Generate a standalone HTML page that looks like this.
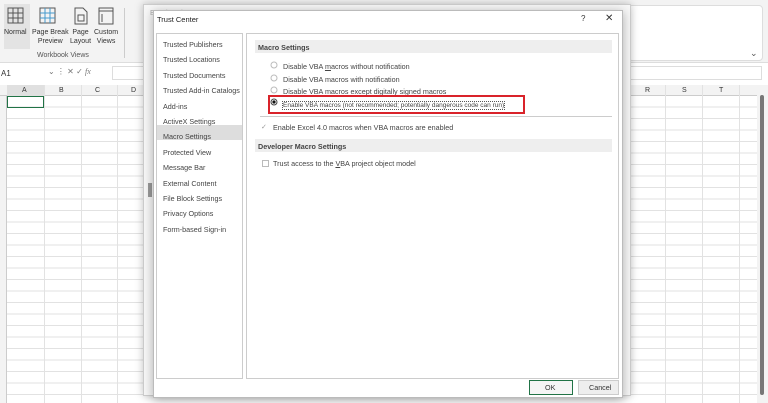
<!DOCTYPE html>
<html><head><style>
*{margin:0;padding:0;box-sizing:border-box}
body{width:768px;height:403px;overflow:hidden;background:#fff;font-family:"Liberation Sans",sans-serif;position:relative;color:#333}
.a{position:absolute}
.t{font-size:7.2px;white-space:nowrap}
</style></head><body>
<div class="a" style="left:0;top:0;width:768px;height:63px;background:#f3f3f3;border-bottom:1px solid #ddd"></div>
<div class="a" style="left:4px;top:4px;width:26px;height:45px;background:#e3e3e3"></div>
<svg class="a" style="left:0;top:5px" width="130" height="30">
<g fill="none" stroke="#555" stroke-width="1">
<rect x="8" y="3" width="15" height="15"/><path d="M8 8h15M8 13h15M13 3v15M18 3v15"/>
<rect x="40" y="3" width="15" height="15"/><path d="M40 8h15M40 13h15M45 3v15M50 3v15" stroke="#49c"/>
<path d="M75 3h8l4 4v12h-12z"/><rect x="78" y="10" width="6" height="6"/>
<rect x="99" y="3" width="14" height="16"/><path d="M99 6h14M102 9v8"/>
</g></svg>
<div class="a t" style="left:4px;top:28px;font-size:7px;line-height:9px">Normal</div>
<div class="a t" style="left:32px;top:28px;font-size:7px;line-height:9px;text-align:center">Page Break<br>Preview</div>
<div class="a t" style="left:70px;top:28px;font-size:7px;line-height:9px;text-align:center">Page<br>Layout</div>
<div class="a t" style="left:94px;top:28px;font-size:7px;line-height:9px;text-align:center">Custom<br>Views</div>
<div class="a t" style="left:37px;top:52px;font-size:7px;color:#555">Workbook Views</div>
<div class="a" style="left:124px;top:8px;width:1px;height:50px;background:#ccc"></div>
<div class="a" style="left:628px;top:5px;width:135px;height:56px;background:#fff;border:1px solid #ddd;border-radius:4px"></div>
<div class="a t" style="left:750px;top:48px;font-size:9px;color:#555">⌄</div>
<div class="a t" style="left:1px;top:69px;font-size:8px">A1</div>
<div class="a t" style="left:48px;top:67px;font-size:8px;color:#777">⌄ ⋮ ✕ ✓ <i style="font-family:'Liberation Serif'">fx</i></div>
<div class="a" style="left:112px;top:66px;width:650px;height:14px;border:1px solid #ddd;background:#fff"></div>
<div class="a" style="left:0;top:85px;width:768px;height:11px;background:#f3f3f3;border-bottom:1px solid #ccc"></div>
<div class="a" style="left:7px;top:85px;width:37px;height:11px;background:#e0e0e0"></div>
<div class="a" style="left:0;top:96px;width:768px;height:307px;background:repeating-linear-gradient(#fff 0,#fff 10.5px,#e2e2e2 10.5px,#e2e2e2 11.5px)"></div>
<div class="a" style="left:0;top:96px;width:7px;height:307px;background:#f3f3f3;border-right:1px solid #ccc"></div>
<div class="a" style="left:44px;top:85px;width:1px;height:318px;background:#e2e2e2"></div>
<div class="a" style="left:81px;top:85px;width:1px;height:318px;background:#e2e2e2"></div>
<div class="a" style="left:117px;top:85px;width:1px;height:318px;background:#e2e2e2"></div>
<div class="a" style="left:665px;top:85px;width:1px;height:318px;background:#e2e2e2"></div>
<div class="a" style="left:702px;top:85px;width:1px;height:318px;background:#e2e2e2"></div>
<div class="a" style="left:739px;top:85px;width:1px;height:318px;background:#e2e2e2"></div>
<div class="a t" style="left:22px;top:87px;font-size:7px">A</div>
<div class="a t" style="left:59px;top:87px;font-size:7px">B</div>
<div class="a t" style="left:95px;top:87px;font-size:7px">C</div>
<div class="a t" style="left:131px;top:87px;font-size:7px">D</div>
<div class="a t" style="left:645px;top:87px;font-size:7px">R</div>
<div class="a t" style="left:682px;top:87px;font-size:7px">S</div>
<div class="a t" style="left:719px;top:87px;font-size:7px">T</div>
<div class="a" style="left:7px;top:96px;width:37px;height:12px;border:1.5px solid #217346"></div>
<div class="a" style="left:757px;top:85px;width:11px;height:318px;background:#f3f3f3"></div>
<div class="a" style="left:760px;top:95px;width:4px;height:300px;background:#777;border-radius:2px"></div>
<div class="a" style="left:143px;top:4px;width:488px;height:392px;background:#f7f7f7;border:1px solid #ccc;box-shadow:0 0 8px rgba(0,0,0,.25)"></div>
<div class="a t" style="left:150px;top:8px;color:#aaa">Excel Options</div>
<div class="a" style="left:148px;top:183px;width:4px;height:14px;background:#999"></div>
<div class="a" style="left:153px;top:10px;width:470px;height:388px;background:#fff;border:1px solid #bbb;box-shadow:0 2px 10px rgba(0,0,0,.3)"></div>
<div class="a t" style="left:157px;top:15px;font-size:7.5px;color:#222">Trust Center</div>
<div class="a t" style="left:581px;top:14px;font-size:8px">?</div>
<div class="a t" style="left:605px;top:13px;font-size:10px">✕</div>
<div class="a" style="left:156px;top:33px;width:87px;height:346px;border:1px solid #ccc"></div>
<div class="a" style="left:157px;top:125px;width:85px;height:15px;background:#ddd"></div>
<div class="a t" style="left:163px;top:37px;line-height:15.4px;color:#444">Trusted Publishers<br>Trusted Locations<br>Trusted Documents<br>Trusted Add-in Catalogs<br>Add-ins<br>ActiveX Settings<br>Macro Settings<br>Protected View<br>Message Bar<br>External Content<br>File Block Settings<br>Privacy Options<br>Form-based Sign-in</div>
<div class="a" style="left:246px;top:33px;width:373px;height:346px;border:1px solid #ccc"></div>
<div class="a" style="left:255px;top:40px;width:357px;height:13px;background:#eee"></div>
<div class="a t" style="left:258px;top:43px;font-weight:bold;color:#444">Macro Settings</div>
<svg class="a" style="left:270px;top:60px" width="10" height="50"><g fill="#fff" stroke="#bbb"><circle cx="4" cy="5" r="3"/><circle cx="4" cy="18" r="3"/><circle cx="4" cy="30" r="3"/><circle cx="4" cy="42" r="3" stroke="#444"/></g><circle cx="4" cy="42" r="1.6" fill="#111"/></svg>
<div class="a t" style="left:283px;top:61px;line-height:12.6px;color:#444">Disable VBA <u>m</u>acros without notification<br>Disable VBA macros with notification<br>Disable VBA macros except digitally signed macros<br><span style="outline:1px dotted #555;font-size:6.5px">Enable VBA macros (not recommended; potentially dangerous code can run)</span></div>
<div class="a" style="left:268px;top:95px;width:257px;height:19px;border:2px solid #d9232a"></div>
<div class="a" style="left:260px;top:116px;width:352px;height:1px;background:#ccc"></div>
<div class="a t" style="left:261px;top:122px;color:#999">✓</div>
<div class="a t" style="left:273px;top:123px;color:#444">Enable Excel 4.0 macros when VBA macros are enabled</div>
<div class="a" style="left:255px;top:139px;width:357px;height:13px;background:#eee"></div>
<div class="a t" style="left:258px;top:142px;font-weight:bold;color:#444">Developer Macro Settings</div>
<div class="a" style="left:262px;top:160px;width:7px;height:7px;border:1px solid #bbb"></div>
<div class="a t" style="left:273px;top:159px;color:#444">Trust access to the <u>V</u>BA project object model</div>
<div class="a" style="left:529px;top:380px;width:44px;height:15px;border:1px solid #217346;background:#f5f5f5"></div>
<div class="a t" style="left:545px;top:383px">OK</div>
<div class="a" style="left:578px;top:380px;width:41px;height:15px;border:1px solid #ccc;background:#eee"></div>
<div class="a t" style="left:589px;top:383px">Cancel</div>
</body></html>
